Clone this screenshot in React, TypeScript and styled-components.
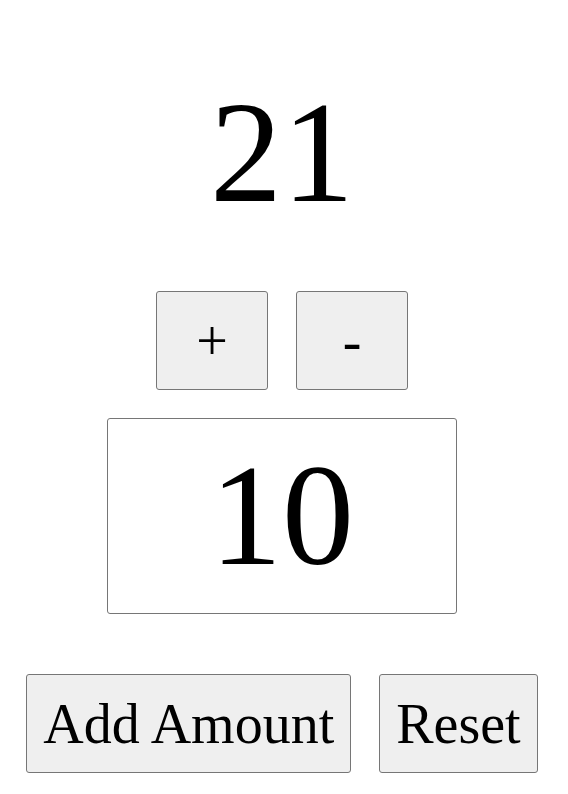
import styled, { createGlobalStyle } from "styled-components";
import { useState } from "react";

const GlobalStyle = createGlobalStyle`
  body {
    margin: 0;
    background: #fff;
    font-family: "Liberation Serif", "Times New Roman", serif;
  }
`;

const Page = styled.div`
  display: flex;
  flex-direction: column;
  align-items: center;
  padding-right: 4px;
`;

const Count = styled.div`
  margin-top: 70px;
  font-size: 144px;
  line-height: 1.15;
`;

const Row = styled.div<{ $top: number }>`
  display: flex;
  gap: 28px;
  margin-top: ${(p) => p.$top}px;
`;

const Button = styled.button<{ $square?: boolean }>`
  box-sizing: border-box;
  font-family: "Liberation Serif", "Times New Roman", serif;
  font-size: 56px;
  line-height: 1.15;
  padding: 17px 16px 15px;
  width: ${(p) => (p.$square ? "112px" : "auto")};
  height: 99px;
  color: #000;
  background-color: #efefef;
  border: 1px solid #767676;
  border-radius: 3px;
  cursor: pointer;

  &:hover {
    background-color: #e5e5e5;
  }
`;

const AmountInput = styled.input`
  box-sizing: border-box;
  margin-top: 28px;
  width: 350px;
  height: 196px;
  padding: 0;
  font-family: "Liberation Serif", "Times New Roman", serif;
  font-size: 144px;
  text-align: center;
  color: #000;
  border: 1px solid #767676;
  border-radius: 3px;
`;

function App() {
  const [count, setCount] = useState(21);
  const [amount, setAmount] = useState("10");

  return (
    <>
      <GlobalStyle />
      <Page>
        <Count>{count}</Count>
        <Row $top={55}>
          <Button $square onClick={() => setCount(count + 1)}>+</Button>
          <Button $square onClick={() => setCount(count - 1)}>-</Button>
        </Row>
        <AmountInput value={amount} onChange={(e) => setAmount(e.target.value)} />
        <Row $top={60}>
          <Button onClick={() => setCount(count + (parseInt(amount) || 0))}>Add Amount</Button>
          <Button onClick={() => setCount(0)}>Reset</Button>
        </Row>
      </Page>
    </>
  );
}

export default App;
